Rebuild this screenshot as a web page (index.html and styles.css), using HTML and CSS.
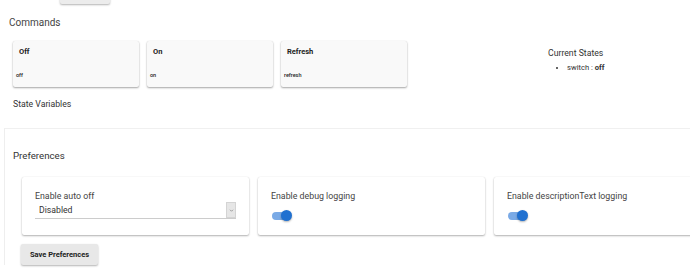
FILE: index.html
```html
<!DOCTYPE html>
<html>
<head>
<meta charset="utf-8">
<link rel="stylesheet" href="styles.css">
</head>
<body>
<div class="topbtn"></div>
<section class="commands">
  <h2 class="h-commands">Commands</h2>
  <div class="cmd-row">
    <div class="cmd-list">
      <div class="cmd"><div class="cmd-title">Off</div><div class="cmd-sub">off</div></div>
      <div class="cmd"><div class="cmd-title">On</div><div class="cmd-sub">on</div></div>
      <div class="cmd"><div class="cmd-title">Refresh</div><div class="cmd-sub">refresh</div></div>
    </div>
    <div class="states">
      <div class="states-title">Current States</div>
      <ul class="states-list"><li>switch : <b>off</b></li></ul>
    </div>
  </div>
  <div class="statevars">State Variables</div>
</section>
<section class="prefs">
  <h2 class="h-prefs">Preferences</h2>
  <div class="pref-row">
    <div class="pref">
      <div class="pref-label">Enable auto off</div>
      <div class="select"><span>Disabled</span><span class="sel-btn"><svg width="5" height="3" viewBox="0 0 6 4"><path d="M1 1 L3 3 L5 1" fill="none" stroke="#777" stroke-width="0.9"/></svg></span></div>
    </div>
    <div class="pref">
      <div class="pref-label">Enable debug logging</div>
      <div class="toggle"><span class="track"></span><span class="thumb"></span></div>
    </div>
    <div class="pref">
      <div class="pref-label">Enable descriptionText logging</div>
      <div class="toggle"><span class="track"></span><span class="thumb"></span></div>
    </div>
  </div>
  <button class="save">Save Preferences</button>
</section>
</body>
</html>
```
FILE: styles.css
```css
* { box-sizing: border-box; }
html, body { margin: 0; padding: 0; background: #fff; }
body { font-family: Roboto, "Liberation Sans", Arial, sans-serif; color: #444; width: 690px; height: 270px; overflow: hidden; }
.topbtn { width: 50px; height: 22px; margin: -18px 0 0 60px; background: #ececec; border-radius: 2px; box-shadow: 0 1px 2px rgba(0,0,0,0.3); }
.commands { padding: 13px 0 0 9px; height: 124px; }
h2 { font-weight: 400; margin: 0; }
.h-commands { font-size: 10px; line-height: 12px; color: #444; }
.cmd-row { display: flex; margin-top: 12px; }
.cmd-list { display: flex; gap: 8px; padding-left: 4px; }
.cmd { width: 126px; height: 46px; background: #f9f9f9; border-radius: 2px; box-shadow: 0 1px 2px rgba(0,0,0,0.35), 0 0 1px rgba(0,0,0,0.12); padding: 6px 6px 0 6px; }
.cmd-title { font-size: 7.5px; font-weight: 700; color: #222; line-height: 9px; }
.cmd-sub { font-size: 5.5px; font-weight: 500; color: #222; margin-top: 16px; margin-left: -3px; line-height: 7px; }
.states { margin-left: 141px; padding-top: 7px; }
.states-title { font-size: 8.7px; color: #333; line-height: 11px; }
.states-list { margin: 4px 0 0 0; padding-left: 19px; font-size: 7.6px; color: #333; line-height: 10px; }
.states-list b { font-weight: 700; }
.statevars { font-size: 8.7px; color: #333; margin: 12px 0 0 4px; line-height: 11px; }
.prefs { margin-left: 4px; border-left: 1px solid #eee; border-top: 1px solid #f0f0f0; padding: 21px 0 0 8px; }
.h-prefs { font-size: 9.7px; line-height: 12px; color: #333; }
.pref-row { display: flex; gap: 9px; margin-top: 15px; padding-left: 9px; }
.pref { width: 227px; flex: none; height: 58px; background: #fff; border-radius: 2px; box-shadow: 0 1px 2px rgba(0,0,0,0.3), 0 0 1px rgba(0,0,0,0.12); padding: 14px 13px 0 13px; }
.pref-label { font-size: 8.8px; color: #444; line-height: 11px; }
.select { display: flex; justify-content: space-between; align-items: center; height: 17px; margin-top: 0px; border-bottom: 1px solid #ccc; padding-left: 4px; font-size: 8.7px; color: #333; }
.sel-btn { width: 10px; height: 16px; background: #e6e6e6; border: 1px solid #d4d4d4; display: flex; align-items: center; justify-content: center; }
.toggle { position: relative; width: 22px; height: 12px; margin-top: 8px; margin-left: 1px; }
.track { position: absolute; left: 0; top: 2px; width: 17px; height: 8px; border-radius: 4px; background: #7aaae6; }
.thumb { position: absolute; left: 9px; top: 0px; width: 11px; height: 11px; border-radius: 50%; background: #2070d0; box-shadow: 0 1px 2px rgba(0,0,0,0.3); }
.save { margin: 9px 0 0 8px; width: 77px; height: 21px; border: none; border-radius: 2px; background: #e8e8e8; box-shadow: 0 1px 2px rgba(0,0,0,0.3); font-family: Roboto, "Liberation Sans", Arial, sans-serif; font-size: 7.5px; font-weight: 700; color: #222; padding: 0; }
```
